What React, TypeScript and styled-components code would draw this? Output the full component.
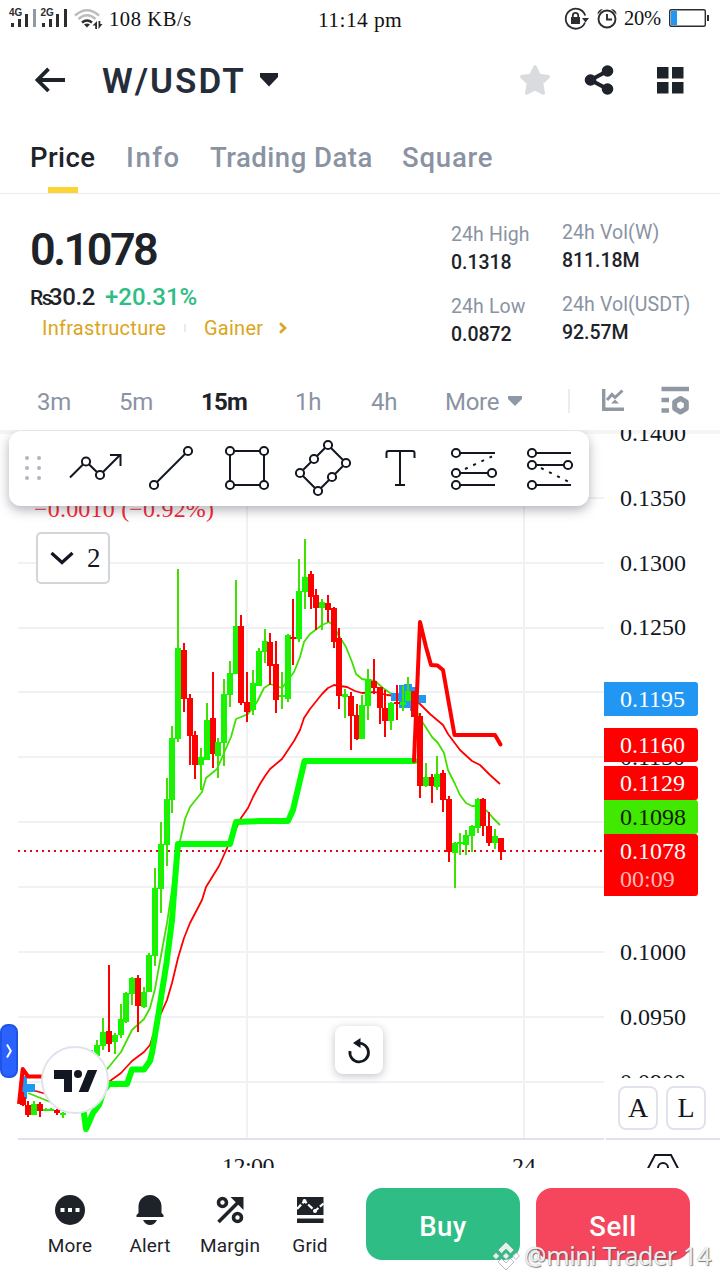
import React from "react";
import styled, { createGlobalStyle } from "styled-components";

const INK = "#1e2329";
const MUTED = "#8a93a3";
const SERIF = '"Liberation Serif", "Times New Roman", serif';
const SANS = 'Roboto, "Liberation Sans", sans-serif';

const GlobalStyle = createGlobalStyle`
  * { box-sizing: border-box; }
  body { margin: 0; background: #fff; }
`;

const Screen = styled.div`
  width: 720px;
  height: 1280px;
  display: flex;
  flex-direction: column;
  overflow: hidden;
  position: relative;
  background: #fff;
  color: ${INK};
  font-family: ${SANS};
  svg { display: block; flex: none; }
`;

const StatusBar = styled.div`
  height: 38px;
  flex: none;
  display: flex;
  align-items: flex-start;
  font-family: ${SERIF};
  color: #111;
`;

const StatusText = styled.span<{ $width: number; $size: number; $top: number; $spacing?: number }>`
  width: ${(p) => p.$width}px;
  padding-top: ${(p) => p.$top}px;
  font-size: ${(p) => p.$size}px;
  line-height: 24px;
  letter-spacing: ${(p) => p.$spacing ?? 0}px;
  white-space: nowrap;
`;

const Header = styled.header`
  height: 84px;
  flex: none;
  display: flex;
  align-items: center;
`;

const Title = styled.h1`
  margin: 4px 0 0 36px;
  width: 157px;
  font-size: 35px;
  line-height: 44px;
  font-weight: 600;
  letter-spacing: 2px;
  white-space: nowrap;
  color: #252d3b;
`;

const Tabs = styled.nav`
  height: 72px;
  flex: none;
  display: flex;
  padding-left: 30px;
  border-bottom: 1px solid #eaecef;
`;

const Tab = styled.span<{ $active?: boolean; $width: number; $spacing: number }>`
  width: ${(p) => p.$width}px;
  font-size: 27.5px;
  line-height: 72px;
  font-weight: 500;
  white-space: nowrap;
  letter-spacing: ${(p) => p.$spacing}px;
  color: ${(p) => (p.$active ? INK : MUTED)};
  ${(p) =>
    p.$active &&
    `&::after {
      content: "";
      display: block;
      width: 30px;
      height: 6px;
      margin: -7px 0 0 18px;
      background: #fcd535;
    }`}
`;

const Summary = styled.section`
  height: 178px;
  flex: none;
  display: flex;
  padding-left: 30px;
`;

const PriceColumn = styled.div`
  width: 421px;
  padding-top: 31px;
`;

const LastPrice = styled.div`
  font-size: 45px;
  line-height: 50px;
  font-weight: 600;
  letter-spacing: -2.5px;
`;

const ChangeRow = styled.div`
  display: flex;
  margin-top: 7px;
  height: 30px;
  line-height: 30px;
  font-size: 24px;
  font-weight: 500;
`;

const Fiat = styled.span`
  width: 75px;
  letter-spacing: -0.4px;
`;

const RupeeSign = styled.span`
  font-family: Roboto, "Liberation Sans", sans-serif;
  font-size: 21px;
  letter-spacing: -3.5px;
`;

const Change = styled.span`
  color: #2ebd85;
`;

const TagRow = styled.div`
  display: flex;
  align-items: center;
  height: 30px;
  margin-top: 1px;
  padding-left: 12px;
  font-size: 20px;
  color: #dba520;
`;

const Tag = styled.span<{ $width: number }>`
  width: ${(p) => p.$width}px;
  letter-spacing: 0.25px;
`;

const TagDivider = styled.i`
  width: 2px;
  height: 8px;
  margin-right: 18px;
  background: #eaecef;
`;

const StatColumn = styled.dl<{ $width: number; $top: number }>`
  width: ${(p) => p.$width}px;
  margin: 0;
  padding-top: ${(p) => p.$top}px;
`;

const StatLabel = styled.dt<{ $spacing?: number }>`
  height: 28px;
  font-size: 19.5px;
  line-height: 28px;
  color: ${MUTED};
  letter-spacing: ${(p) => p.$spacing ?? 0.1}px;
  white-space: nowrap;
`;

const StatValue = styled.dd`
  margin: 0 0 16px;
  height: 28px;
  font-size: 19.5px;
  line-height: 28px;
  font-weight: 500;
  letter-spacing: -0.05px;
`;

const IntervalBar = styled.div`
  height: 58px;
  flex: none;
  display: flex;
  align-items: center;
  padding-left: 37px;
  font-size: 24px;
`;

const Interval = styled.span<{ $width: number; $active?: boolean }>`
  width: ${(p) => p.$width}px;
  color: ${(p) => (p.$active ? INK : MUTED)};
  font-weight: ${(p) => (p.$active ? 700 : 400)};
  letter-spacing: ${(p) => (p.$active ? -0.8 : -0.3)}px;
  white-space: nowrap;
  padding-top: 2px;
`;

const IntervalDivider = styled.i`
  width: 2px;
  height: 24px;
  margin: 0 32px 0 46px;
  background: #eaecef;
`;

const ChartArea = styled.main`
  position: relative;
  height: 738px;
  flex: none;
  overflow: hidden;
`;

const DrawingToolbar = styled.div`
  position: absolute;
  left: 9px;
  top: 1px;
  width: 580px;
  height: 75px;
  display: flex;
  background: #fff;
  border-radius: 12px;
  box-shadow: 0 4px 12px rgba(60, 64, 80, 0.4);
`;

const LegendToggle = styled.button`
  position: absolute;
  left: 36px;
  top: 102px;
  width: 74px;
  height: 52px;
  padding: 0 0 0 12px;
  display: flex;
  align-items: center;
  gap: 13px;
  background: rgba(255, 255, 255, 0.9);
  border: 2px solid #d4d5db;
  border-radius: 5px;
  font: 27px ${SERIF};
  color: #131722;
`;

const ResetButton = styled.button`
  position: absolute;
  left: 335px;
  top: 596px;
  width: 48px;
  height: 48px;
  padding: 0;
  border: 0;
  border-radius: 8px;
  background: #fff;
  box-shadow: 0 2px 8px rgba(60, 64, 80, 0.32);
`;

const BrandBadge = styled.div`
  position: absolute;
  left: 41px;
  top: 616px;
  width: 68px;
  height: 68px;
  border: 2px solid #e0e3eb;
  border-radius: 50%;
  background: #fff;
`;

const PanelHandle = styled.div`
  position: absolute;
  left: 0;
  top: 594px;
  width: 18px;
  height: 54px;
  border: 2px solid #1e53e5;
  border-radius: 8px;
  background: #2962ff;
`;

const ScaleButtons = styled.div`
  position: absolute;
  left: 606px;
  top: 648px;
  width: 114px;
  height: 60px;
  display: flex;
  gap: 8px;
  padding: 8px 0 0 12px;
  background: #fff;
`;

const ScaleButton = styled.button`
  width: 40px;
  height: 44px;
  padding: 0;
  border: 2px solid #e0e3eb;
  border-radius: 8px;
  background: #fff;
  font: 28px ${SERIF};
  color: #131722;
`;

const BottomBar = styled.footer`
  height: 112px;
  flex: none;
  display: flex;
  padding-left: 30px;
`;

const Action = styled.div`
  width: 80px;
  padding-top: 26px;
  display: flex;
  flex-direction: column;
  align-items: center;
  font-size: 19px;
  line-height: 24px;
  letter-spacing: 0.2px;
  svg { margin-bottom: 8px; }
`;

const TradeButton = styled.button<{ $color: string }>`
  width: 154px;
  height: 72px;
  margin: 20px 0 0 16px;
  padding: 5px 0 0;
  border: 0;
  border-radius: 16px;
  background: ${(p) => p.$color};
  color: #fff;
  font: 500 27.5px ${SANS};
  letter-spacing: 0.5px;
`;

const Watermark = styled.div`
  position: absolute;
  left: 492px;
  top: 1239px;
  display: flex;
  align-items: center;
  gap: 4px;
  height: 34px;
  font: 25px "Noto Sans", sans-serif;
  letter-spacing: -0.35px;
  white-space: nowrap;
  color: rgba(255, 255, 255, 0.9);
  text-shadow: 1px 1px 1px rgba(80, 84, 92, 0.75), 0 0 1px rgba(120, 124, 130, 0.7);
`;

const WatermarkText = styled.span`
  line-height: 30px;
  padding-bottom: 3px;
`;

type Candle = [number, number, number, number, number, 0 | 1];

// x, high, body top, body bottom, low, rising
const CANDLES: Candle[] = [
  [23, 1092, 1097, 1105, 1106, 0], [28, 1101, 1105, 1115, 1117, 0], [34, 1101, 1104, 1115, 1115, 1],
  [40, 1102, 1104, 1111, 1117, 0], [46, 1108, 1109, 1111, 1111, 1], [51, 1108, 1109, 1111, 1111, 1],
  [57, 1109, 1110, 1113, 1115, 0], [63, 1112, 1113, 1115, 1118, 1], [69, 1100, 1106, 1112, 1112, 1],
  [92, 1050, 1055, 1075, 1080, 1], [97, 1040, 1045, 1056, 1060, 1], [103, 1018, 1032, 1046, 1050, 1],
  [109, 965, 1031, 1044, 1052, 0], [115, 1033, 1035, 1042, 1054, 1], [121, 1004, 1019, 1035, 1038, 1],
  [126, 992, 993, 1022, 1023, 1], [132, 977, 978, 994, 1005, 1], [138, 975, 978, 1006, 1032, 0],
  [144, 987, 992, 1007, 1008, 1], [149, 953, 955, 992, 992, 1], [155, 868, 888, 956, 966, 1],
  [161, 822, 844, 889, 913, 1], [167, 778, 799, 845, 866, 1], [172, 726, 738, 800, 813, 1],
  [178, 569, 648, 739, 742, 1], [184, 643, 650, 699, 712, 0], [190, 694, 698, 736, 765, 0],
  [195, 731, 735, 765, 779, 0], [201, 748, 757, 765, 790, 1], [207, 703, 720, 760, 760, 1],
  [213, 672, 718, 754, 768, 0], [218, 738, 742, 756, 778, 1], [224, 679, 694, 743, 766, 1],
  [230, 661, 673, 695, 707, 1], [236, 580, 626, 674, 674, 1], [241, 615, 626, 703, 705, 0],
  [247, 672, 702, 712, 722, 0], [253, 670, 683, 710, 715, 1], [259, 648, 651, 686, 686, 1],
  [265, 629, 641, 652, 663, 1], [270, 633, 642, 666, 685, 0], [276, 641, 664, 700, 713, 0],
  [282, 672, 695, 697, 709, 1], [288, 634, 635, 699, 702, 1], [293, 599, 637, 639, 665, 0],
  [299, 559, 591, 639, 642, 1], [305, 539, 577, 592, 609, 1], [311, 571, 574, 597, 609, 0],
  [316, 589, 595, 608, 630, 0], [322, 599, 602, 608, 630, 1], [328, 595, 603, 610, 622, 0],
  [334, 607, 608, 642, 648, 0], [339, 628, 638, 696, 709, 0], [345, 689, 694, 697, 718, 1],
  [351, 692, 696, 716, 750, 0], [357, 704, 715, 739, 740, 0], [362, 695, 705, 739, 739, 1],
  [368, 669, 679, 706, 720, 1], [374, 659, 681, 688, 694, 0], [380, 687, 687, 708, 724, 0],
  [385, 690, 708, 721, 737, 0], [391, 702, 703, 721, 730, 1], [397, 685, 702, 704, 720, 0],
  [403, 686, 702, 705, 711, 1], [408, 677, 691, 701, 701, 1], [414, 691, 691, 717, 717, 0],
  [420, 713, 716, 786, 798, 0], [426, 763, 777, 786, 787, 1], [432, 774, 777, 786, 803, 0],
  [437, 756, 774, 787, 790, 1], [443, 770, 773, 800, 812, 0], [449, 796, 799, 852, 862, 0],
  [455, 842, 843, 853, 888, 1], [460, 833, 842, 844, 855, 1], [466, 830, 835, 845, 855, 1],
  [472, 825, 826, 836, 852, 1], [478, 798, 799, 828, 833, 1], [483, 798, 799, 826, 836, 0],
  [489, 812, 826, 843, 846, 0], [495, 829, 836, 843, 849, 1], [501, 838, 838, 852, 860, 0],
];

const FAST_MA =
  "28,1093 48,1101 62,1104 80,1094 108,1068 121,1052 132,1030 144,1019 150,1008 155,989 160,961 167,923 172,890 178,850 185,819 190,807 202,792 206,778 217,769 224,753 231,737 236,719 241,717 248,714 257,702 264,688 270,684 276,686 282,688 288,680 294,672 300,657 304,642 310,634 322,625 329,622 333,625 339,636 346,647 352,662 356,674 362,679 375,681 383,688 390,693 413,700 417,712 423,723 432,737 438,743 444,753 448,770 455,784 460,795 466,803 472,806 478,806 487,811 493,818 500,825";
const SLOW_MA =
  "28,1089 43,1093 62,1096 90,1092 110,1081 121,1073 132,1061 144,1052 150,1045 158,1020 167,1000 172,983 178,958 184,938 190,923 202,900 206,887 219,866 228,846 241,818 248,808 253,797 260,784 265,776 270,769 282,759 294,741 300,730 304,718 310,709 322,694 328,688 334,685 340,686 347,687 355,691 362,693 375,692 387,695 398,696 414,699 420,704 430,714 443,725 448,734 460,750 472,761 480,765 490,775 500,784";
const UP_TREND =
  "83,1106 86,1129 93,1113 99,1105 104,1090 109,1084 127,1084 132,1069.500 144,1069.500 150,1061 152,1053 158,1017 166.500,963 172,920 175,880 178,844 230,844 236,822 260,821 288,821 293,810 304.500,761 415,761";
const DOWN_TREND = "414,761 420,622 426,647 431,665 437.500,665.500 443,670 454.500,735 495,735 500.500,744.500";
const DOWN_TREND_START = "19,1104 22.700,1069 28,1076.500 60,1076.500";

const GRID_Y = [433, 498, 563, 628, 692, 757, 822, 887, 952, 1017, 1082];

const AXIS_LABELS: [string, number][] = [
  ["0.1400", 441], ["0.1350", 506], ["0.1300", 571], ["0.1250", 635],
  ["0.1150", 765], ["0.1000", 960], ["0.0950", 1025], ["0.0900", 1090],
];

const PRICE_BADGES = [
  { text: "0.1195", top: 682, height: 34, fill: "#2196f3", color: "#fff" },
  { text: "0.1160", top: 728, height: 34, fill: "#ff0000", color: "#fff" },
  { text: "0.1129", top: 766, height: 34, fill: "#ff0000", color: "#fff" },
  { text: "0.1098", top: 800, height: 34, fill: "#41e800", color: "#0b1a06" },
  { text: "0.1078", top: 834, height: 62, fill: "#ff0000", color: "#fff" },
];

function Chart() {
  return (
    <svg width="720" height="738" viewBox="0 430 720 738" fontFamily={SERIF} fontSize="24">
      <g fill="#f1f1f3">
        {GRID_Y.map((y) => (
          <rect key={y} x="18" y={y - 1} width="586" height="2" />
        ))}
        <rect x="246" y="430" width="2" height="708" />
        <rect x="523" y="430" width="2" height="708" />
        <rect x="0" y="430" width="720" height="4" fill="#f5f5f5" />
      </g>
      <g fill="#e0e3eb">
        <rect x="18" y="1138" width="586" height="2" />
        <rect x="606" y="1138" width="114" height="2" />
      </g>
      <text x="34" y="517" fill="#f7252f" letterSpacing="0.200">−0.0010 (−0.92%)</text>

      <g fill="none" strokeLinejoin="round">
        <polyline points={FAST_MA} stroke="#41e000" strokeWidth="1.800" />
        <polyline points={SLOW_MA} stroke="#ff0000" strokeWidth="1.800" />
      </g>
      <g fill="#2196f3">
        <path d="M391 693h8v-8h5v-1h8v3h4v8h10v8h-10v8h-6v-3h-11v-7h-8z" />
        <path d="M22 1076h5v8h8v8h-8v7h-7z" />
      </g>
      <path d="M18 851H604" stroke="#e80010" strokeWidth="2" strokeDasharray="2 4" />
      <g fill="none" strokeLinejoin="round" strokeLinecap="round">
        <polyline points={UP_TREND} stroke="#00ff00" strokeWidth="6" />
        <polyline points={DOWN_TREND} stroke="#ff0000" strokeWidth="4" />
        <polyline points={DOWN_TREND_START} stroke="#ff0000" strokeWidth="4" strokeLinecap="butt" />
      </g>
      {CANDLES.map(([x, high, top, bottom, low, up]) => (
        <g key={x}>
          <rect x={x - 3} y={top} width="6" height={bottom - top} fill={up ? "#00ff00" : "#ff0000"} />
          <rect x={x - 1} y={high} width="2" height={low - high} fill={up ? "#41e000" : "#ff0000"} />
        </g>
      ))}

      <g fill="#131722">
        {AXIS_LABELS.map(([label, y]) => (
          <text key={label} x="620" y={y}>{label}</text>
        ))}
        <text x="248" y="1174" textAnchor="middle" letterSpacing="-0.500">12:00</text>
        <text x="524" y="1174" textAnchor="middle">24</text>
      </g>
      <rect x="606" y="1078" width="114" height="60" fill="#fff" />
      {PRICE_BADGES.map((b) => (
        <g key={b.text}>
          <path
            d={`M604 ${b.top}h91a3 3 0 0 1 3 3v${b.height - 6}a3 3 0 0 1 -3 3h-91z`}
            fill={b.fill}
          />
          <text x="620" y={b.top + 25} fill={b.color}>{b.text}</text>
        </g>
      ))}
      <text x="620" y="887" fill="#ffb9b9">00:09</text>

      <g fill="none" stroke="#131722" strokeWidth="2">
        <path d="M643 1178L655 1155H671L683 1178" />
        <circle cx="663" cy="1168" r="5" />
      </g>
    </svg>
  );
}

const Node = ({ x, y }: { x: number; y: number }) => <circle cx={x} cy={y} r="4.100" fill="#fff" />;

function Tool({ children }: { children: React.ReactNode }) {
  return (
    <svg width="76" height="75" viewBox="0 0 76 75" fill="none" stroke="#131722" strokeWidth="2">
      {children}
    </svg>
  );
}

function Tools() {
  return (
    <DrawingToolbar>
      <svg width="48" height="75" viewBox="0 0 48 75" fill="#b2b5be">
        {[27, 37, 47].map((y) => (
          <g key={y}>
            <circle cx="18" cy={y} r="2" />
            <circle cx="30" cy={y} r="2" />
          </g>
        ))}
      </svg>
      <Tool>
        <path d="M13 46.500L29 30.500L43 44L63 24M53 24H63.500V35" />
        <Node x={29} y={30.5} /><Node x={43} y={44} />
      </Tool>
      <Tool>
        <path d="M21 54L55 20" />
        <Node x={21} y={54} /><Node x={55} y={20} />
      </Tool>
      <Tool>
        <path d="M21 20H55V54H21Z" />
        <Node x={21} y={20} /><Node x={55} y={20} /><Node x={21} y={54} /><Node x={55} y={54} />
      </Tool>
      <Tool>
        <path d="M43 14L61 32L33 60L15 42Z" />
        <Node x={43} y={14} /><Node x={61} y={32} /><Node x={47} y={46} />
        <Node x={33} y={60} /><Node x={15} y={42} /><Node x={29} y={28} />
      </Tool>
      <Tool>
        <path d="M25.500 27V22Q25.500 20 27.500 20H51.500Q53.500 20 53.500 22V27M39 20V54M34 54H44" />
      </Tool>
      <Tool>
        <path d="M19 22H58M19 42H55M19 54H58" />
        <path d="M28 38L55 25.500" strokeDasharray="3 6" />
        <Node x={19} y={22} /><Node x={19} y={42} /><Node x={55} y={42} /><Node x={19} y={54} />
      </Tool>
      <Tool>
        <path d="M19 22H58M19 34H55M19 54H58" />
        <path d="M28 37L56 51" strokeDasharray="3 6" />
        <Node x={19} y={22} /><Node x={19} y={34} /><Node x={55} y={34} /><Node x={19} y={54} />
      </Tool>
    </DrawingToolbar>
  );
}

function SignalIcons() {
  return (
    <svg width="109" height="38" viewBox="0 0 109 38" fill="#2b2d31">
      <g fontFamily="Liberation Sans" fontWeight="700" fontSize="10">
        <text x="9" y="16">4G</text>
        <text x="40.500" y="16">2G</text>
      </g>
      <path d="M11 23h3v4h-3zM18 19h3v8h-3zM25 14h3v13h-3zM42 23h3v4h-3zM49 19h3v8h-3zM56 14h3v13h-3zM64 9h3v18h-3z" />
      <path d="M33 9h3v18h-3z" fill="#9398a5" />
      <g fill="none" strokeWidth="2.600">
        <path d="M75 15.500Q87 5 99 15.500" stroke="#bdbdbf" />
        <path d="M78.500 19Q87 11.500 95.500 19" stroke="#bdbdbf" />
        <path d="M82 22.500Q87 18.500 92 22.500" stroke="#2b2d31" />
      </g>
      <path d="M84 24.500q3-2 6 0l-3 3z" />
      <path d="M92.500 25.500l4.500-4.500v8h-1.800v-3.500zM102.500 24l-4 5v-8h1.800v3z" />
    </svg>
  );
}

function StatusIcons() {
  return (
    <svg width="61" height="38" viewBox="563 0 61 38" fill="#2b2d31">
      <path d="M585 22.500A10 10 0 1 1 585.200 15.500" fill="none" stroke="#2b2d31" strokeWidth="1.800" />
      <path d="M582 18h7l-3.500 4.500z" />
      <path d="M571 17h9v7h-9z" />
      <path d="M572.800 18v-2.500a2.700 2.700 0 0 1 5.400 0V18" fill="none" stroke="#2b2d31" strokeWidth="1.800" />
      <circle cx="607" cy="19" r="8.500" fill="none" stroke="#2b2d31" strokeWidth="1.900" />
      <path d="M607 14v5.500h5" fill="none" stroke="#2b2d31" strokeWidth="1.900" />
      <path d="M597.500 14.500q0-5 5.500-5.500zM616.500 14.500q0-5-5.500-5.500z" />
    </svg>
  );
}

export default function App() {
  return (
    <Screen>
      <GlobalStyle />
      <StatusBar>
        <SignalIcons />
        <StatusText $width={209} $size={20.5} $top={7} $spacing={0.6}>108 KB/s</StatusText>
        <StatusText $width={245} $size={21.5} $top={8} $spacing={0.4}>11:14 pm</StatusText>
        <StatusIcons />
        <StatusText $width={44} $size={20.5} $top={6} $spacing={-0.2}>20%</StatusText>
        <svg width="44" height="38" viewBox="668 0 44 38">
          <rect x="669.700" y="9.700" width="35.600" height="16.600" rx="1.500" fill="none" stroke="#2b2d31" strokeWidth="1.400" />
          <path d="M671 11h6v14h-6z" fill="#2196f3" />
          <path d="M707 15h2v6h-2z" fill="#2b2d31" />
        </svg>
      </StatusBar>

      <Header>
        <svg width="66" height="84" viewBox="0 38 66 84" fill="none" stroke={INK} strokeWidth="3.800">
          <path d="M65 80H37M48.500 68.800L37.500 80L48.500 91" />
        </svg>
        <Title>W/USDT</Title>
        <svg width="20" height="84" viewBox="259 38 20 84" fill={INK}>
          <path d="M260 73h18v4l-9 9.500l-9-9.500z" />
        </svg>
        <svg width="441" height="84" viewBox="279 38 441 84" fill={INK}>
          <path
            d="M535 66.500l4.300 8.700l9.200 1.400l-6.700 6.700l1.700 10l-8.500-4.500l-8.500 4.500l1.700-10l-6.700-6.700l9.200-1.400z"
            fill="#d9dbdf" stroke="#d9dbdf" strokeWidth="3" strokeLinejoin="round"
          />
          <path d="M607.500 71L590.500 80L607.500 89" fill="none" stroke={INK} strokeWidth="4" />
          <circle cx="590.500" cy="80" r="5.800" />
          <circle cx="607.500" cy="71" r="5.800" />
          <circle cx="607.500" cy="89" r="5.800" />
          <path d="M657 67h11.500v11.500H657zM672 67h11.500v11.500H672zM657 82h11.500v11.500H657zM672 82h11.500v11.500H672z" />
        </svg>
      </Header>

      <Tabs>
        <Tab $active $width={96} $spacing={0.4}>Price</Tab>
        <Tab $width={84} $spacing={1.6}>Info</Tab>
        <Tab $width={192} $spacing={0.5}>Trading Data</Tab>
        <Tab $width={100} $spacing={0.8}>Square</Tab>
      </Tabs>

      <Summary>
        <PriceColumn>
          <LastPrice>0.1078</LastPrice>
          <ChangeRow>
            <Fiat><RupeeSign>₨</RupeeSign>30.2</Fiat>
            <Change>+20.31%</Change>
          </ChangeRow>
          <TagRow>
            <Tag $width={142}>Infrastructure</Tag>
            <TagDivider />
            <Tag $width={74}>Gainer</Tag>
            <svg width="10" height="14" viewBox="0 0 10 14" fill="none" stroke="#dba520" strokeWidth="2.600">
              <path d="M2 2.200L7 7L2 11.800" />
            </svg>
          </TagRow>
        </PriceColumn>
        <StatColumn $width={111} $top={27}>
          <StatLabel>24h High</StatLabel>
          <StatValue>0.1318</StatValue>
          <StatLabel>24h Low</StatLabel>
          <StatValue>0.0872</StatValue>
        </StatColumn>
        <StatColumn $width={150} $top={25}>
          <StatLabel>24h Vol(W)</StatLabel>
          <StatValue>811.18M</StatValue>
          <StatLabel>24h Vol(USDT)</StatLabel>
          <StatValue>92.57M</StatValue>
        </StatColumn>
      </Summary>

      <IntervalBar>
        <Interval $width={82}>3m</Interval>
        <Interval $width={82}>5m</Interval>
        <Interval $width={94} $active>15m</Interval>
        <Interval $width={76}>1h</Interval>
        <Interval $width={74}>4h</Interval>
        <Interval $width={63}>More</Interval>
        <svg width="14" height="10" viewBox="0 0 14 10" fill="#8f98a5">
          <path d="M0 0h14v3L7 10L0 3z" />
        </svg>
        <IntervalDivider />
        <svg width="118" height="58" viewBox="602 372 118 58" fill="none" stroke="#8f98a3" strokeWidth="3.400">
          <path d="M603.700 389V409.300H624" />
          <path d="M607 400L612 394.500L615 397.500L622.500 390.500" strokeWidth="3" />
          <path d="M611 403.500l4-4l4 4z" fill="#8f98a3" stroke="none" />
          <path d="M661.500 389H689M661.500 400H669M661.500 410.500H669" strokeWidth="4.600" />
          <path d="M680.500 398.500L686.300 401.800V408.600L680.500 412L674.700 408.600V401.800Z" strokeWidth="5" strokeLinejoin="round" />
        </svg>
      </IntervalBar>

      <ChartArea>
        <Chart />
        <ScaleButtons>
          <ScaleButton>A</ScaleButton>
          <ScaleButton>L</ScaleButton>
        </ScaleButtons>
        <LegendToggle>
          <svg width="24" height="14" viewBox="0 0 24 14" fill="none" stroke="#131722" strokeWidth="3.200">
            <path d="M1.500 2L12 11.500L22.500 2" />
          </svg>
          2
        </LegendToggle>
        <Tools />
        <ResetButton>
          <svg width="48" height="48" viewBox="335 1026 48 48">
            <path d="M358 1043.300A9.300 9.300 0 1 1 350 1051" fill="none" stroke="#131722" strokeWidth="2.800" />
            <path d="M353 1043L360.500 1038V1048z" fill="#131722" />
          </svg>
        </ResetButton>
        <BrandBadge>
          <svg width="64" height="64" viewBox="43 1048 64 64" fill="#131722">
            <path d="M54 1070h18v22h-8v-13h-10z" />
            <circle cx="78" cy="1074" r="4" />
            <path d="M87.700 1070h9.500l-9 22h-9.500z" />
          </svg>
        </BrandBadge>
        <PanelHandle>
          <svg width="14" height="50" viewBox="2 1026 14 50" fill="none" stroke="#fff" strokeWidth="2">
            <path d="M7 1044.500L10.800 1051L7 1057.500" />
          </svg>
        </PanelHandle>
      </ChartArea>

      <BottomBar>
        <Action>
          <svg width="32" height="32" viewBox="54 1194 32 32">
            <circle cx="70" cy="1210" r="15" fill={INK} />
            <path d="M60.500 1208h4v4h-4zM68 1208h4v4h-4zM75.500 1208h4v4h-4z" fill="#fff" />
          </svg>
          More
        </Action>
        <Action>
          <svg width="32" height="32" viewBox="134 1194 32 32" fill={INK}>
            <path d="M138.500 1213V1206.500a11.500 11.500 0 0 1 23 0V1213l2 2v2H136.500v-2z" />
            <path d="M143 1220h14q-2.500 5-7 5t-7-5z" />
          </svg>
          Alert
        </Action>
        <Action>
          <svg width="32" height="32" viewBox="214 1194 32 32" fill="none" stroke={INK} strokeWidth="3.600">
            <circle cx="222.500" cy="1202.500" r="4" />
            <circle cx="237.500" cy="1217.500" r="4" />
            <path d="M218.500 1222L240 1200.500" />
            <path d="M230.500 1197h13v13z" fill={INK} stroke="none" />
          </svg>
          Margin
        </Action>
        <Action>
          <svg width="32" height="32" viewBox="294 1194 32 32">
            <path d="M297 1197h26.500v18H297zM297 1218.500h26.500v4.500H297z" fill={INK} />
            <path d="M297 1209L304.500 1201L315 1211L323.500 1203.500" fill="none" stroke="#fff" strokeWidth="2.200" strokeDasharray="6 2" />
            <circle cx="304.500" cy="1201" r="2" fill="#fff" />
            <circle cx="315" cy="1211" r="2" fill="#fff" />
          </svg>
          Grid
        </Action>
        <TradeButton $color="#2ebd85">Buy</TradeButton>
        <TradeButton $color="#f6465d">Sell</TradeButton>
      </BottomBar>

      <Watermark>
        <svg width="28" height="30" viewBox="0 0 28 30" fill="#fff" stroke="#8e9196" strokeWidth="0.700" opacity="0.850">
          <path d="M14 1L22 9L18.500 12.500L14 8L9.500 12.500L6 9z" />
          <path d="M14 29L22 21L18.500 17.500L14 22L9.500 17.500L6 21z" />
          <path d="M14 11.500L17.500 15L14 18.500L10.500 15zM4 11.500L7.500 15L4 18.500L0.500 15zM24 11.500L27.500 15L24 18.500L20.500 15z" />
        </svg>
        <WatermarkText>@mini Trader 14</WatermarkText>
      </Watermark>
    </Screen>
  );
}
